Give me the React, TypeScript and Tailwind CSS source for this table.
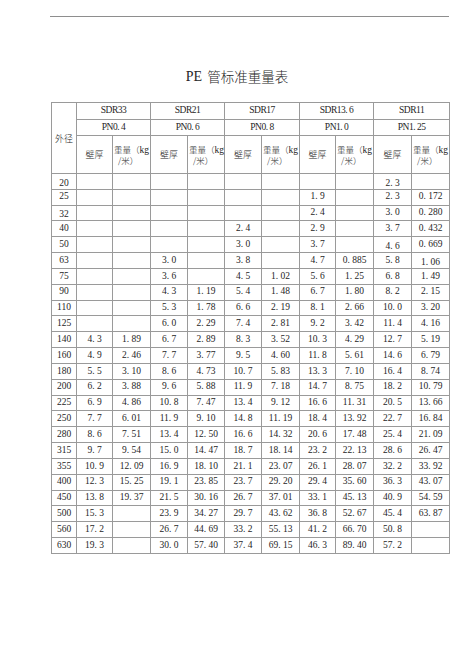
import React from "react";

type Row = { od: string; v: string[]; low?: number[] };

const raw: [string, string[]][] = [
  ["20", ["", "", "", "", "", "", "", "", "2.3", ""]],
  ["25", ["", "", "", "", "", "", "1.9", "", "2.3", "0.172"]],
  ["32", ["", "", "", "", "", "", "2.4", "", "3.0", "0.280"]],
  ["40", ["", "", "", "", "2.4", "", "2.9", "", "3.7", "0.432"]],
  ["50", ["", "", "", "", "3.0", "", "3.7", "", "4.6", "0.669"]],
  ["63", ["", "", "3.0", "", "3.8", "", "4.7", "0.885", "5.8", "1.06"]],
  ["75", ["", "", "3.6", "", "4.5", "1.02", "5.6", "1.25", "6.8", "1.49"]],
  ["90", ["", "", "4.3", "1.19", "5.4", "1.48", "6.7", "1.80", "8.2", "2.15"]],
  ["110", ["", "", "5.3", "1.78", "6.6", "2.19", "8.1", "2.66", "10.0", "3.20"]],
  ["125", ["", "", "6.0", "2.29", "7.4", "2.81", "9.2", "3.42", "11.4", "4.16"]],
  ["140", ["4.3", "1.89", "6.7", "2.89", "8.3", "3.52", "10.3", "4.29", "12.7", "5.19"]],
  ["160", ["4.9", "2.46", "7.7", "3.77", "9.5", "4.60", "11.8", "5.61", "14.6", "6.79"]],
  ["180", ["5.5", "3.10", "8.6", "4.73", "10.7", "5.83", "13.3", "7.10", "16.4", "8.74"]],
  ["200", ["6.2", "3.88", "9.6", "5.88", "11.9", "7.18", "14.7", "8.75", "18.2", "10.79"]],
  ["225", ["6.9", "4.86", "10.8", "7.47", "13.4", "9.12", "16.6", "11.31", "20.5", "13.66"]],
  ["250", ["7.7", "6.01", "11.9", "9.10", "14.8", "11.19", "18.4", "13.92", "22.7", "16.84"]],
  ["280", ["8.6", "7.51", "13.4", "12.50", "16.6", "14.32", "20.6", "17.48", "25.4", "21.09"]],
  ["315", ["9.7", "9.54", "15.0", "14.47", "18.7", "18.14", "23.2", "22.13", "28.6", "26.47"]],
  ["355", ["10.9", "12.09", "16.9", "18.10", "21.1", "23.07", "26.1", "28.07", "32.2", "33.92"]],
  ["400", ["12.3", "15.25", "19.1", "23.85", "23.7", "29.20", "29.4", "35.60", "36.3", "43.07"]],
  ["450", ["13.8", "19.37", "21.5", "30.16", "26.7", "37.01", "33.1", "45.13", "40.9", "54.59"]],
  ["500", ["15.3", "", "23.9", "34.27", "29.7", "43.62", "36.8", "52.67", "45.4", "63.87"]],
  ["560", ["17.2", "", "26.7", "44.69", "33.2", "55.13", "41.2", "66.70", "50.8", ""]],
  ["630", ["19.3", "", "30.0", "57.40", "37.4", "69.15", "46.3", "89.40", "57.2", ""]],
];

const lowCells: Record<string, number[]> = {
  "20": [-1, 8],
  "32": [-1],
  "50": [8],
  "63": [9],
};

const rows: Row[] = raw.map(([od, v]) => ({ od, v, low: lowCells[od] }));

const fmt = (s: string) => s.replace(".", ". ");

const groups = [
  ["SDR33", "PN0. 4"],
  ["SDR21", "PN0. 6"],
  ["SDR17", "PN0. 8"],
  ["SDR13. 6", "PN1. 0"],
  ["SDR11", "PN1. 25"],
];

const bd = "border border-[#9a9a9a] p-0";

export default function App() {
  return (
    <div className="w-[474px] h-[671px] bg-white text-[#262626] font-['Liberation_Serif','Noto_Sans_CJK_SC',serif] overflow-hidden">
      <div className="pt-[16px] pl-[50px]">
        <div className="w-[399px] h-px bg-[#8e8e8e]" />
      </div>
      <div className="mt-[50px] h-[20px] flex justify-center items-center">
        <span className="text-[14px] leading-none">PE</span>
        <span className="ml-[5px] text-[13.5px] leading-none font-['Noto_Sans_CJK_SC',sans-serif] font-light">
          管标准重量表
        </span>
      </div>
      <div className="mt-[15px] pl-[51px]">
        <table className="table-fixed border-collapse w-[398px] text-[9.5px] leading-none">
          <colgroup>
            <col className="w-[25px]" />
            <col className="w-[36px]" />
            <col className="w-[38px]" />
            <col className="w-[37px]" />
            <col className="w-[37px]" />
            <col className="w-[37px]" />
            <col className="w-[38px]" />
            <col className="w-[36px]" />
            <col className="w-[38px]" />
            <col className="w-[38px]" />
            <col className="w-[38px]" />
          </colgroup>
          <thead>
            <tr className="h-[17px]">
              <td
                rowSpan={3}
                className={`${bd} text-center align-middle font-['Noto_Sans_CJK_SC',sans-serif] font-light text-[9px]`}
              >
                外径
              </td>
              {groups.map((g) => (
                <td key={g[0]} colSpan={2} className={`${bd} text-center align-middle whitespace-pre tracking-[-0.5px]`}>
                  {g[0]}
                </td>
              ))}
            </tr>
            <tr className="h-[16px]">
              {groups.map((g) => (
                <td key={g[1]} colSpan={2} className={`${bd} text-center align-middle whitespace-pre tracking-[-0.5px]`}>
                  {g[1]}
                </td>
              ))}
            </tr>
            <tr className="h-[38px]">
              {groups.map((g) => (
                <React.Fragment key={g[0] + "h"}>
                  <td className={`${bd} text-center align-middle font-['Noto_Sans_CJK_SC',sans-serif] font-light text-[9px]`}>
                    壁厚
                  </td>
                  <td className={`${bd} align-middle font-['Noto_Sans_CJK_SC',sans-serif] font-light text-[8.5px] leading-[10px]`}>
                    <div className="flex flex-col items-start whitespace-nowrap pl-px">
                      <span>
                        重量（<span className="font-['Liberation_Serif',serif] text-[9.5px] font-normal">kg</span>
                      </span>
                      <span className="pl-[4px]">/米）</span>
                    </div>
                  </td>
                </React.Fragment>
              ))}
            </tr>
          </thead>
          <tbody>
            {rows.map((r) => (
              <tr key={r.od} className="h-[15.83px]">
                <td className={`${bd} text-center align-middle ${r.low?.includes(-1) ? "pt-[4px]" : ""}`}>{r.od}</td>
                {r.v.map((c, i) => (
                  <td
                    key={i}
                    className={`${bd} text-center align-middle whitespace-pre ${r.low?.includes(i) ? "pt-[4px]" : ""}`}
                  >
                    {fmt(c)}
                  </td>
                ))}
              </tr>
            ))}
          </tbody>
        </table>
      </div>
    </div>
  );
}
